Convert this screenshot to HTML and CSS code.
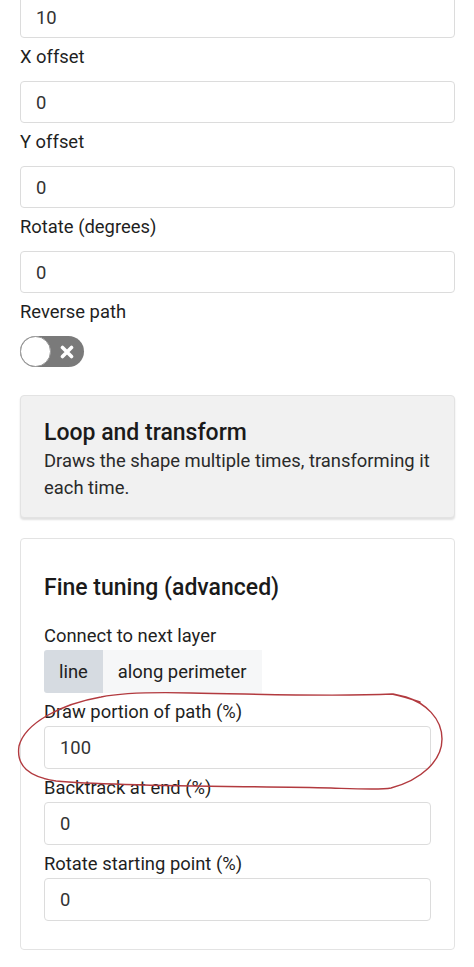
FILE: index.html
```html
<!DOCTYPE html>
<html lang="en">
<head>
  <meta charset="UTF-8">
  <meta name="viewport" content="width=device-width, initial-scale=1.0">
  <title>Shape settings</title>
  <link rel="stylesheet" href="styles.css">
</head>
<body>
  <div class="page">
    <!-- Basic transform fields -->
    <div class="field first">
      <input class="text-input" type="text" value="10">
    </div>
    <div class="field">
      <label class="field-label">X offset</label>
      <input class="text-input" type="text" value="0">
    </div>
    <div class="field">
      <label class="field-label">Y offset</label>
      <input class="text-input" type="text" value="0">
    </div>
    <div class="field">
      <label class="field-label">Rotate (degrees)</label>
      <input class="text-input" type="text" value="0">
    </div>
    <div class="field">
      <label class="field-label">Reverse path</label>
      <span class="toggle">
        <span class="toggle-knob"></span>
        <svg class="toggle-x" viewBox="0 0 14 14" width="14" height="14">
          <path d="M2.5 2.5 L11.5 11.5 M11.5 2.5 L2.5 11.5" stroke="#fff" stroke-width="3.6" stroke-linecap="round"/>
        </svg>
      </span>
    </div>

    <!-- Collapsed section -->
    <section class="panel panel-muted">
      <h2 class="panel-title">Loop and transform</h2>
      <p class="panel-desc">Draws the shape multiple times, transforming it each time.</p>
    </section>

    <!-- Advanced section -->
    <section class="panel panel-open">
      <h2 class="panel-title">Fine tuning (advanced)</h2>
      <div class="sub-field">
        <label class="field-label">Connect to next layer</label>
        <div class="btn-group">
          <button class="seg active">line</button>
          <button class="seg">along perimeter</button>
        </div>
      </div>
      <div class="sub-field">
        <label class="field-label">Draw portion of path (%)</label>
        <input class="text-input" type="text" value="100">
      </div>
      <div class="sub-field">
        <label class="field-label">Backtrack at end (%)</label>
        <input class="text-input" type="text" value="0">
      </div>
      <div class="sub-field">
        <label class="field-label">Rotate starting point (%)</label>
        <input class="text-input" type="text" value="0">
      </div>

      <!-- hand-drawn highlight -->
      <svg class="scribble" viewBox="10 684 440 112" width="440" height="112">
        <path d="M419 701 C410 698 400 695 391 693 C330 696 260 693 190 692 C150 691 120 692 100 696 C60 703 24 722 18 745 C15 765 28 776 55 780 C120 786 250 785 330 787 C360 788 380 789 390 787 C420 779 441 760 441 738 C441 717 424 702 405 696 L392 693" fill="none" stroke="#b23a3f" stroke-width="1.4" stroke-linecap="round" stroke-linejoin="round"/>
      </svg>
    </section>
  </div>
</body>
</html>
```

FILE: styles.css
```css
/* General */
body {
  margin: 0;
  background: #fff;
  color: #1f1f1f;
  font-family: Roboto, "Noto Sans", sans-serif;
  font-size: 18.4px;
}

.page {
  margin-top: -4px;
  padding: 0 19px 0 20px;
}

/* Fields */
.field {
  display: flex;
  flex-direction: column;
}

.field-label {
  display: block;
  line-height: 24px;
  margin: 7px 0 12px;
}

.text-input {
  box-sizing: border-box;
  width: 100%;
  height: 42px;
  padding: 0 15px;
  border: 1px solid #dcdcdc;
  border-radius: 4px;
  font-family: inherit;
  font-size: 18.4px;
  color: #333;
  background: #fff;
}

/* Toggle */
.toggle {
  position: relative;
  display: flex;
  align-items: center;
  justify-content: flex-end;
  width: 64px;
  height: 31px;
  padding-right: 10px;
  box-sizing: border-box;
  border-radius: 16px;
  background: #7a7a7a;
}

.toggle-knob {
  position: absolute;
  left: 0;
  top: 0;
  width: 31px;
  height: 31px;
  box-sizing: border-box;
  border-radius: 50%;
  border: 1px solid #9a9a9a;
  background: #fff;
}

/* Panels */
.panel {
  position: relative;
  border: 1px solid #e3e3e3;
  border-radius: 4px;
}

.panel-muted {
  margin-top: 28px;
  padding: 23px 23px 16px;
  background: #f1f1f1;
  box-shadow: 0 2px 2px rgba(0, 0, 0, 0.12);
}

.panel-open {
  margin-top: 20px;
  padding: 35px 23px 28px;
  background: #fff;
}

.panel-title {
  margin: 0;
  font-size: 23px;
  font-weight: 500;
  line-height: 28px;
  color: #1a1a1a;
}

.panel-desc {
  margin: 0;
  line-height: 27px;
  color: #2a2a2a;
}

.panel-open .panel-title {
  margin-bottom: 22px;
}

.sub-field .field-label {
  margin: 7px 0 2px;
}

.sub-field .text-input {
  height: 43px;
}

/* Segmented buttons */
.btn-group {
  display: flex;
}

.seg {
  height: 43px;
  padding: 0 15px;
  border: none;
  font-family: inherit;
  font-size: 18.4px;
  color: #212121;
  background: #f6f7f8;
}

.seg.active {
  background: #d6dbe1;
  border-radius: 3px 0 0 3px;
}

/* Annotation */
.scribble {
  position: absolute;
  left: -10px;
  top: 146px;
  pointer-events: none;
}
```
